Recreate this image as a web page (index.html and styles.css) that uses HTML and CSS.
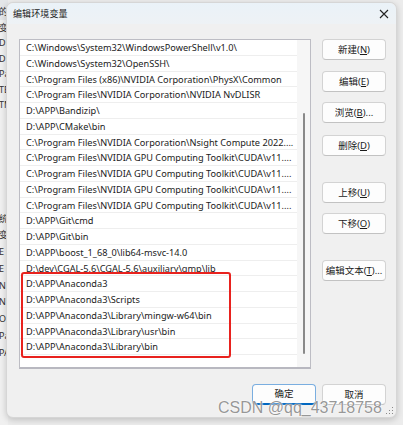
FILE: index.html
```html
<!DOCTYPE html>
<html lang="zh-CN">
<head>
<meta charset="utf-8">
<title>编辑环境变量</title>
<link rel="stylesheet" href="styles.css">
</head>
<body>
<div class="desk">
  <div class="behind">
    <div class="frag-group g1">
      <div>的</div><div>变</div><div>D</div><div>D</div><div>Pa</div><div>TE</div><div>TM</div>
    </div>
    <div class="frag-group g2">
      <div>统</div><div>变</div><div>E</div><div>E</div><div>N</div><div>N'</div><div>O</div><div>Pa</div><div>PA</div>
    </div>
  </div>

  <div class="dialog">
    <div class="titlebar">
      <span class="title">编辑环境变量</span>
      <svg class="close" width="10" height="10" viewBox="0 0 10 10"><path d="M1 1L9 9M9 1L1 9" stroke="#222" stroke-width="1.1" fill="none"/></svg>
    </div>
    <div class="body">
      <div class="list">
        <div class="rows">
          <div class="row">C:\Windows\System32\WindowsPowerShell\v1.0\</div>
          <div class="row">C:\Windows\System32\OpenSSH\</div>
          <div class="row">C:\Program Files (x86)\NVIDIA Corporation\PhysX\Common</div>
          <div class="row">C:\Program Files\NVIDIA Corporation\NVIDIA NvDLISR</div>
          <div class="row">D:\APP\Bandizip\</div>
          <div class="row">D:\APP\CMake\bin</div>
          <div class="row">C:\Program Files\NVIDIA Corporation\Nsight Compute 2022....</div>
          <div class="row">C:\Program Files\NVIDIA GPU Computing Toolkit\CUDA\v11....</div>
          <div class="row">C:\Program Files\NVIDIA GPU Computing Toolkit\CUDA\v11....</div>
          <div class="row">C:\Program Files\NVIDIA GPU Computing Toolkit\CUDA\v11....</div>
          <div class="row">C:\Program Files\NVIDIA GPU Computing Toolkit\CUDA\v11....</div>
          <div class="row">D:\APP\Git\cmd</div>
          <div class="row">D:\APP\Git\bin</div>
          <div class="row">D:\APP\boost_1_68_0\lib64-msvc-14.0</div>
          <div class="row">D:\dev\CGAL-5.6\CGAL-5.6\auxiliary\gmp\lib</div>
          <div class="row">D:\APP\Anaconda3</div>
          <div class="row">D:\APP\Anaconda3\Scripts</div>
          <div class="row">D:\APP\Anaconda3\Library\mingw-w64\bin</div>
          <div class="row">D:\APP\Anaconda3\Library\usr\bin</div>
          <div class="row">D:\APP\Anaconda3\Library\bin</div>
        </div>
        <div class="scroll"><div class="thumb"></div></div>
      </div>
      <div class="side">
        <button class="btn b-new">新建(<u>N</u>)</button>
        <button class="btn b-edit">编辑(<u>E</u>)</button>
        <button class="btn b-browse">浏览(<u>B</u>)...</button>
        <button class="btn b-del">删除(<u>D</u>)</button>
        <button class="btn b-up">上移(<u>U</u>)</button>
        <button class="btn b-down">下移(<u>O</u>)</button>
        <button class="btn b-text">编辑文本(<u>T</u>)...</button>
      </div>
    </div>
    <div class="footer">
      <button class="btn default">确定</button>
      <button class="btn">取消</button>
    </div>
    <div class="redbox"></div>
    <div class="grip"><i></i><i></i><i></i><i></i><i></i><i></i></div>
  </div>

  <div class="watermark">CSDN @qq_43718758</div>
</div>
</body>
</html>
```

FILE: styles.css
```css
* { box-sizing: border-box; }
html, body { margin: 0; padding: 0; }
body {
  width: 403px;
  height: 425px;
  overflow: hidden;
  font-family: "Noto Sans", "Noto Sans CJK SC", sans-serif;
  color: #1b1b1b;
}
.desk {
  position: relative;
  width: 403px;
  height: 425px;
  background: #ececec;
  overflow: hidden;
}
.behind {
  position: absolute;
  left: 0;
  top: 0;
  width: 8px;
  height: 425px;
  overflow: hidden;
  background: linear-gradient(#e4e6e8 0, #e4e6e8 20px, #f0f0f0 20px);
}
.frag-group {
  font-size: 9px;
  color: #333;
  margin-left: -1px;
  white-space: nowrap;
}
.frag-group.g1 { padding-top: 4px; line-height: 15.5px; }
.frag-group.g2 { margin-top: 98px; line-height: 16.8px; }

.dialog {
  position: absolute;
  left: 6px;
  top: 2px;
  width: 391px;
  height: 416px;
  background: #f0f0f0;
  border-radius: 7px;
  border: 1px solid #d6d6d6;
  box-shadow: 0 2px 6px rgba(0,0,0,0.18);
  display: flex;
  flex-direction: column;
}
.titlebar {
  height: 21px;
  background: linear-gradient(#eaf2f8, #eef2f5);
  border-radius: 7px 7px 0 0;
  display: flex;
  align-items: center;
  justify-content: space-between;
  padding: 0 7px 0 6px;
}
.title {
  font-size: 9px;
  color: #1a1a1a;
  letter-spacing: 0.1px;
}
.close { display: block; }

.body {
  display: flex;
  padding: 15px 10px 0 12px;
  gap: 11px;
}
.list {
  width: 293px;
  height: 330px;
  background: #fff;
  border: 1px solid #bdbdc4;
  border-bottom: 2px solid #b8b8c0;
  display: flex;
}
.rows {
  flex: 1;
  display: flex;
  flex-direction: column;
}
.row {
  height: 15.75px;
  line-height: 15px;
  padding-left: 6px;
  font-size: 9.2px;
  white-space: nowrap;
  overflow: hidden;
  border-bottom: 1px solid #eeeeee;
  color: #1b1b1b;
}
.scroll {
  width: 13px;
  background: #f6f6f6;
  display: flex;
  justify-content: center;
  padding-top: 73px;
}
.thumb {
  width: 2px;
  height: 241px;
  background: #8a8a8a;
  border-radius: 1px;
  margin-left: 1px;
}

.side {
  display: flex;
  flex-direction: column;
  width: 64px;
}
.btn {
  width: 64px;
  height: 21px;
  padding: 0;
  background: #fdfdfd;
  border: 1px solid #d3d3d3;
  border-bottom-color: #c2c2c2;
  border-radius: 4px;
  font-family: "Noto Sans", "Noto Sans CJK SC", sans-serif;
  font-size: 9.5px;
  color: #1b1b1b;
  line-height: 18px;
  white-space: nowrap;
}
.btn u { text-decoration-thickness: 1px; text-underline-offset: 1px; }
.side .btn { margin-top: 11px; }
.side .b-new { margin-top: 0; }
.side .b-browse { margin-top: 10px; }
.side .b-del { margin-top: 12px; }
.side .b-up { margin-top: 26px; }
.side .b-down { margin-top: 10px; }
.side .b-text { margin-top: 26px; }

.footer {
  display: flex;
  justify-content: flex-end;
  gap: 6px;
  padding: 15px 10px 0 0;
}
.btn.default {
  border: 1px solid #7aaee0;
  border-bottom: 2px solid #0067c0;
}

.redbox {
  position: absolute;
  left: 14px;
  top: 269px;
  width: 210px;
  height: 86px;
  border: 2px solid #e8221e;
  border-radius: 3px;
}
.grip {
  position: absolute;
  right: 3px;
  bottom: 3px;
  width: 8px;
  height: 8px;
}
.grip i {
  position: absolute;
  width: 1.5px;
  height: 1.5px;
  background: #8a8a8a;
}
.grip i:nth-child(1) { right: 0; bottom: 0; }
.grip i:nth-child(2) { right: 3px; bottom: 0; }
.grip i:nth-child(3) { right: 6px; bottom: 0; }
.grip i:nth-child(4) { right: 0; bottom: 3px; }
.grip i:nth-child(5) { right: 3px; bottom: 3px; }
.grip i:nth-child(6) { right: 0; bottom: 6px; }

.watermark {
  position: absolute;
  left: 218px;
  top: 399px;
  font-family: "Liberation Sans", Arial, sans-serif;
  font-size: 16px;
  color: rgba(105,105,105,0.7);
  text-shadow: 0 0 1px #fff, 0 0 2px #fff;
  white-space: nowrap;
}
```
